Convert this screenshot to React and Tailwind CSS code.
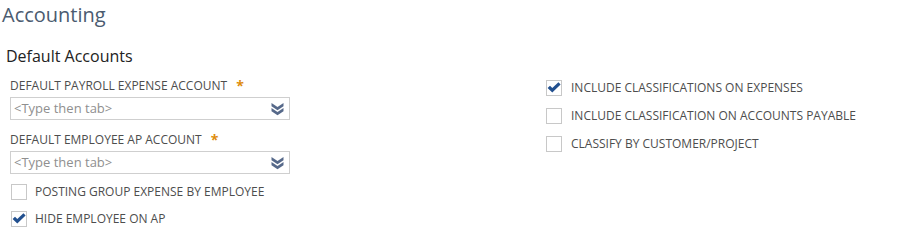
const font = { fontFamily: '"Open Sans", "Noto Sans", Arial, sans-serif' };

function DoubleChevron() {
  return (
    <svg width="13" height="14" viewBox="0 0 13 14" className="shrink-0">
      <path d="M0.5 1 L6.5 5 L12.5 1 L12.5 4.2 L6.5 8.2 L0.5 4.2 Z" fill="#56698a" />
      <path d="M0.5 6 L6.5 10 L12.5 6 L12.5 9.2 L6.5 13.2 L0.5 9.2 Z" fill="#56698a" />
    </svg>
  );
}

function Checkbox({ checked, label, gap = "ml-2" }) {
  return (
    <div className="flex items-center h-4">
      <div className="w-4 h-4 border border-[#c8c8c8] bg-white flex items-center justify-center shrink-0">
        {checked ? (
          <svg width="14" height="12" viewBox="0 0 14 12">
            <path
              d="M0.6 6 L3 3.8 L5.3 6 L11.4 0.2 L13.6 2.5 L5.3 10.4 Z"
              fill="#22508f"
            />
          </svg>
        ) : null}
      </div>
      <span className={`${gap} text-[12px] leading-4 text-[#4d4d4d] uppercase`}>{label}</span>
    </div>
  );
}

function LookupField({ label }) {
  return (
    <div>
      <div className="flex items-center h-4 text-[12px] leading-4 text-[#4d4d4d] uppercase">
        <span>{label}</span>
        <span className="ml-[9px] text-[#de8c0d] font-bold text-[14px]">*</span>
      </div>
      <div className="mt-[3px] h-[23px] w-[280px] border border-[#cfcfcf] bg-white flex items-center justify-between pl-[3px] pr-[5px]">
        <span className="text-[13px] text-[#8f8f8f]">&lt;Type then tab&gt;</span>
        <DoubleChevron />
      </div>
    </div>
  );
}

export default function App() {
  return (
    <div className="w-[922px] h-[239px] bg-white overflow-hidden" style={font}>
      <h1 className="pl-[2px] text-[20px] leading-[30px] text-[#4b5b70]">Accounting</h1>
      <h2 className="mt-[15px] pl-[6px] text-[16px] leading-[22px] text-[#222]">Default Accounts</h2>
      <div className="flex mt-[11px]">
        <div className="ml-[10px] w-[280px] flex flex-col">
          <LookupField label="Default Payroll Expense Account" />
          <div className="mt-[12px]">
            <LookupField label="Default Employee AP Account" />
          </div>
          <div className="mt-[10px] ml-[1px] flex flex-col gap-[11px]">
            <Checkbox label="Posting Group Expense by Employee" />
            <Checkbox checked label="Hide Employee on AP" />
          </div>
        </div>
        <div className="ml-[256px] mt-[2px] flex flex-col gap-[12px]">
          <Checkbox checked label="Include Classifications on Expenses" gap="ml-[9px]" />
          <Checkbox label="Include Classification on Accounts Payable" gap="ml-[9px]" />
          <Checkbox label="Classify by Customer/Project" gap="ml-[9px]" />
        </div>
      </div>
    </div>
  );
}
